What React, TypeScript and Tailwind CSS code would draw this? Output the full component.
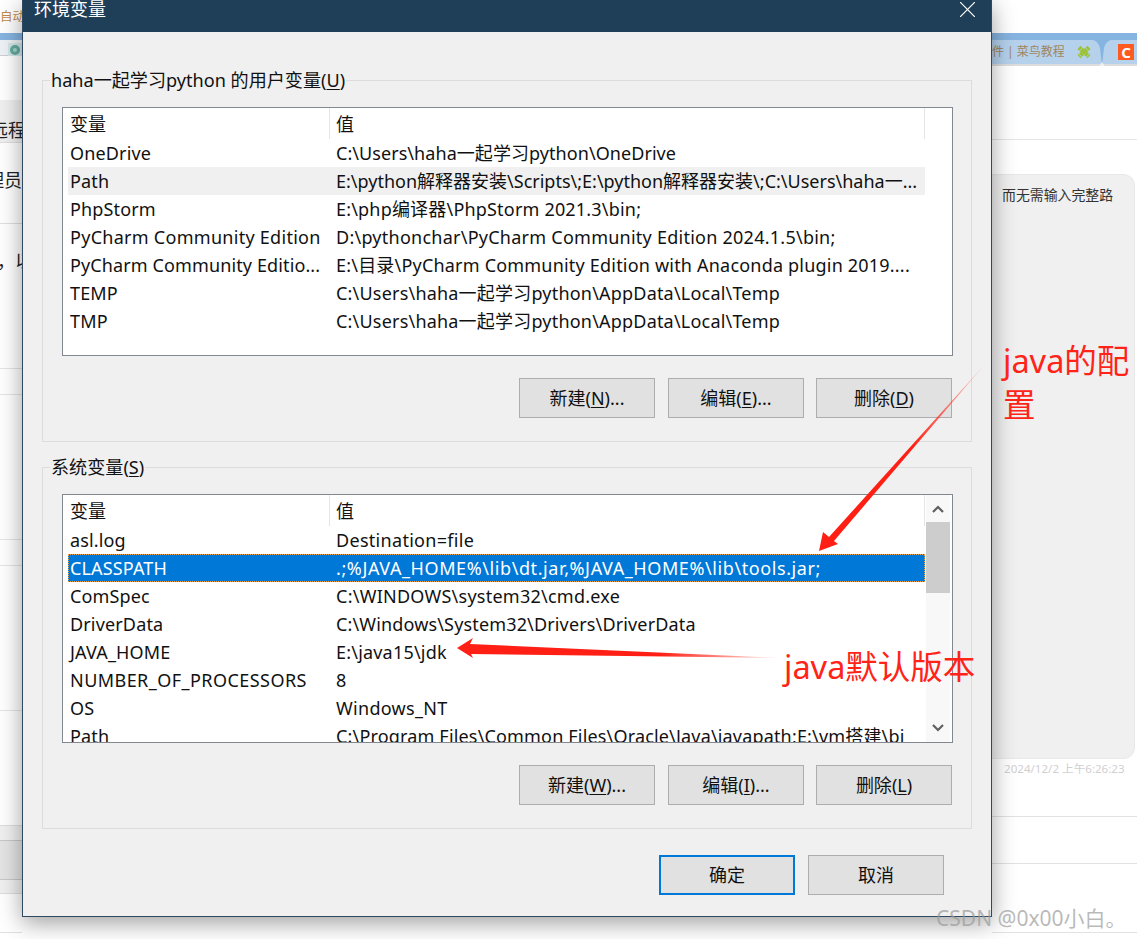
import React from "react";

const FONT = "font-['Noto_Sans','Noto_Sans_CJK_SC',sans-serif]";

type Row = { name: string; value: string; state?: "hover" | "selected"; tr?: string; nameTr?: string };

const userRows: Row[] = [
  { name: "OneDrive", value: "C:\\Users\\haha一起学习python\\OneDrive", tr: "tracking-[0.06px]" },
  { name: "Path", value: "E:\\python解释器安装\\Scripts\\;E:\\python解释器安装\\;C:\\Users\\haha一...", state: "hover", tr: "tracking-[0px]" },
  { name: "PhpStorm", value: "E:\\php编译器\\PhpStorm 2021.3\\bin;", tr: "tracking-[0.19px]" },
  { name: "PyCharm Community Edition", value: "D:\\pythonchar\\PyCharm Community Edition 2024.1.5\\bin;", tr: "tracking-[0.25px]", nameTr: "tracking-[0.28px]" },
  { name: "PyCharm Community Editio...", value: "E:\\目录\\PyCharm Community Edition with Anaconda plugin 2019....", tr: "tracking-[0.2px]", nameTr: "tracking-[0.12px]" },
  { name: "TEMP", value: "C:\\Users\\haha一起学习python\\AppData\\Local\\Temp", tr: "tracking-[0.2px]" },
  { name: "TMP", value: "C:\\Users\\haha一起学习python\\AppData\\Local\\Temp", tr: "tracking-[0.2px]" },
];

const systemRows: Row[] = [
  { name: "asl.log", value: "Destination=file", tr: "tracking-[0.3px]" },
  { name: "CLASSPATH", value: ".;%JAVA_HOME%\\lib\\dt.jar,%JAVA_HOME%\\lib\\tools.jar;", state: "selected", tr: "tracking-[0.59px]" },
  { name: "ComSpec", value: "C:\\WINDOWS\\system32\\cmd.exe", tr: "tracking-[0.25px]" },
  { name: "DriverData", value: "C:\\Windows\\System32\\Drivers\\DriverData", tr: "tracking-[0.15px]" },
  { name: "JAVA_HOME", value: "E:\\java15\\jdk", tr: "tracking-[0.2px]" },
  { name: "NUMBER_OF_PROCESSORS", value: "8", nameTr: "tracking-[0.45px]" },
  { name: "OS", value: "Windows_NT", tr: "tracking-[0.3px]" },
  { name: "Path", value: "C:\\Program Files\\Common Files\\Oracle\\Java\\javapath;E:\\vm搭建\\bi", tr: "tracking-[0.17px]" },
];

function Mnemonic({ label, k, tail = "" }: { label: string; k: string; tail?: string }) {
  return (
    <>
      {label}(<span className="underline underline-offset-2 decoration-1">{k}</span>){tail}
    </>
  );
}

function WinButton({ children, primary, className = "" }: { children: React.ReactNode; primary?: boolean; className?: string }) {
  return (
    <button
      className={
        "w-[136px] h-10 flex items-center justify-center bg-[#e1e1e1] text-[18px] text-[#111] " +
        (primary ? "border-2 border-[#0078d7] " : "border border-[#adadad] ") +
        className
      }
    >
      {children}
    </button>
  );
}

function ListView({ rows, scroll }: { rows: Row[]; scroll?: boolean }) {
  return (
    <div className="ml-[19px] w-[891px] h-[249px] border border-[#828790] bg-white flex overflow-hidden">
      <div className="w-[863px] pl-[5px] flex flex-col shrink-0">
        <div className="h-[31px] shrink-0 flex text-[18px] text-[#111] leading-[33px]">
          <div className="w-[262px] pl-[2px] border-r border-[#e5e5e5]">变量</div>
          <div className="w-[595px] pl-[6px] border-r border-[#e5e5e5]">值</div>
        </div>
        {rows.map((r) => (
          <div
            key={r.name + r.value}
            className={
              "w-[857px] h-7 shrink-0 flex text-[18px] leading-7 whitespace-nowrap " +
              (r.state === "selected"
                ? "bg-[#0078d7] text-white outline-1 outline-dotted outline-[#e8a04a] -outline-offset-1"
                : r.state === "hover"
                  ? "bg-[#f0f0f0] text-[#111]"
                  : "text-[#111]")
            }
          >
            <div className={"w-[261px] pl-[2px] overflow-hidden " + (r.nameTr ?? "tracking-[0.15px]")}>{r.name}</div>
            <div className={"w-[596px] pl-[7px] overflow-hidden " + (r.tr ?? "")}>{r.value}</div>
          </div>
        ))}
      </div>
      {scroll && (
        <div className="w-[24px] flex flex-col bg-[#f8f8f8]">
          <div className="h-[27px] flex items-center justify-center">
            <svg width="12" height="8" viewBox="0 0 12 8"><path d="M1 7l5-5 5 5" fill="none" stroke="#606060" strokeWidth="2.2" /></svg>
          </div>
          <div className="h-[71px] bg-[#cdcdcd]" />
          <div className="flex-1" />
          <div className="h-[26px] pb-[3px] flex items-center justify-center">
            <svg width="12" height="8" viewBox="0 0 12 8"><path d="M1 1l5 5 5-5" fill="none" stroke="#606060" strokeWidth="2.2" /></svg>
          </div>
        </div>
      )}
    </div>
  );
}

function Group({ title, rows, buttons, scroll, className }: { title: React.ReactNode; rows: Row[]; buttons: React.ReactNode[]; scroll?: boolean; className: string }) {
  return (
    <div className={"ml-[19px] w-[930px] h-[362px] border border-[#dcdcdc] " + className}>
      <div className="ml-[7px] -mt-[15px] w-fit h-7 px-[1px] bg-[#f0f0f0] text-[18.1px] leading-7 text-[#111] whitespace-nowrap">{title}</div>
      <div className="mt-[13px]">
        <ListView rows={rows} scroll={scroll} />
      </div>
      <div className="mt-[22px] ml-[476px] flex gap-[12px]">
        {buttons.map((b, i) => (
          <WinButton key={i} className={i === 0 ? "mr-[1px]" : ""}>{b}</WinButton>
        ))}
      </div>
    </div>
  );
}

function LeftStrip() {
  return (
    <div className="w-[22px] shrink-0 relative overflow-hidden flex flex-col text-[#222] text-[18px] whitespace-nowrap">
      <div className="h-[33px] pt-[7px] text-[12.5px] leading-5 text-[#c08a4a]">自动</div>
      <div className="h-[7px] bg-[#86b4e0]" />
      <div className="h-[16px] bg-[#eef2f6] pl-2 pt-[3px] border-b border-[#d0d0d0]">
        <div className="w-[14px] h-[13px] bg-[#d3e6e8] flex items-center justify-center">
          <svg width="12" height="12" viewBox="0 0 12 12"><circle cx="6" cy="6" r="5" fill="#62ab9e" /><circle cx="6" cy="6" r="2" fill="#a8d6cc" /></svg>
        </div>
      </div>
      <div className="h-[44px]" />
      <div className="h-[43px] bg-[#f0f0f0] border-b border-[#e0e0e0] pt-[18px] leading-6 -indent-[10px]">远程</div>
      <div className="h-[80px] pt-[27px] -indent-[14px] leading-5">理员</div>
      <div className="h-[1px] bg-[#e0e0e0]" />
      <div className="h-[144px] pt-[27px] -indent-[3px] leading-5">，以</div>
      <div className="h-[1px] bg-[#e5e5e5]" />
      <div className="h-[25px]" />
      <div className="h-[1px] bg-[#e5e5e5]" />
      <div className="h-[144px]" />
      <div className="h-[1px] bg-[#e5e5e5]" />
      <div className="h-[25px]" />
      <div className="h-[1px] bg-[#e5e5e5]" />
      <div className="h-[144px]" />
      <div className="h-[1px] bg-[#e5e5e5]" />
      <div className="h-[114px]" />
      <div className="h-[15px] bg-[#f0f0f0] border-t border-[#ddd]" />
      <div className="h-[40px] bg-[#e4e4e4] border-y border-[#c8c8c8]" />
      <div className="h-[14px] bg-[#f0f0f0] border-b border-[#ddd]" />
      <div className="h-[38px]" />
      <div className="h-[1px] bg-[#e0e0e0]" />
    </div>
  );
}

function RightStrip() {
  return (
    <div className="flex-1 flex flex-col min-w-0 overflow-hidden whitespace-nowrap">
      <div className="h-[33px]" />
      <div className="relative h-[33px] bg-[#86b4e0] pt-[7px] flex border-b-2 border-[#dcdcdc]">
        <div className="flex-1 h-[24px] bg-[#b5d1ec] flex items-center">
          <span className="text-[12px] text-[#a08660] w-[72px] overflow-hidden">件 | 菜鸟教程</span>
          <svg className="ml-[13px] shrink-0" width="14" height="14" viewBox="0 0 14 14"><path d="M2 2.5l10 9M12 2.5l-10 9" stroke="#9cc22f" strokeWidth="4.4" strokeDasharray="2.4 .6" fill="none" /></svg>
          <div className="ml-[27px] shrink-0 w-4 h-4 bg-[#ff5a1f] text-white text-[15px] leading-4 font-bold text-center">C</div>
        </div>
        <svg className="absolute left-[100px] top-[7px]" width="20" height="26" viewBox="0 0 20 26">
          <path d="M1 0Q6 1 8 8L10 25 12 8Q14 1 19 0Z" fill="#86b4e0" />
          <path d="M10 22l-2.5 4h5z" fill="#eef2f6" />
        </svg>
      </div>
      <div className="h-[74px] border-b border-[#e5e5e5]" />
      <div className="h-[34px]" />
      <div className="h-[585px] w-[143px] bg-[#f0f0f0] rounded-r-xl border-r border-t border-b border-[#e8e8e8] pl-[10px] pt-[12px] text-[13.9px] leading-4 text-[#333]">而无需输入完整路</div>
      <div className="h-[58px] pl-[12px] text-[11.6px] leading-5 text-[#d0d0d0] border-b border-[#e2e2e2]">2024/12/2 上午6:26:23</div>
      <div className="h-[47px] border-b border-[#e2e2e2]" />
      <div className="h-[69px] border-b border-[#e2e2e2]" />
    </div>
  );
}

function Dialog() {
  return (
    <div className="relative z-10 w-[970px] h-[917px] shrink-0 flex flex-col bg-[#f0f0f0] border-x border-b border-[#2f4a60] shadow-[0_6px_22px_rgba(0,0,0,0.38)]">
      <div className="h-8 shrink-0 bg-[#1f3f58] flex items-start justify-between pl-[11px] pr-[16px]">
        <span className="text-[18px] leading-[19px] text-white">环境变量</span>
        <svg className="mt-[2px]" width="15" height="15" viewBox="0 0 15 15"><path d="M0 0l15 15M15 0L0 15" stroke="#fff" strokeWidth="1.2" /></svg>
      </div>
      <Group
        className="mt-[48px]"
        title={<Mnemonic label="haha一起学习python 的用户变量" k="U" />}
        rows={userRows}
        buttons={[
          <Mnemonic label="新建" k="N" tail="..." />,
          <Mnemonic label="编辑" k="E" tail="..." />,
          <Mnemonic label="删除" k="D" />,
        ]}
      />
      <Group
        className="mt-[25px]"
        title={<Mnemonic label="系统变量" k="S" />}
        rows={systemRows}
        scroll
        buttons={[
          <Mnemonic label="新建" k="W" tail="..." />,
          <Mnemonic label="编辑" k="I" tail="..." />,
          <Mnemonic label="删除" k="L" />,
        ]}
      />
      <div className="mt-[26px] ml-[636px] flex gap-[13px]">
        <WinButton primary>确定</WinButton>
        <WinButton>取消</WinButton>
      </div>
    </div>
  );
}

export default function App() {
  return (
    <div className={"relative w-[1137px] h-[939px] overflow-hidden bg-white flex " + FONT}>
      <LeftStrip />
      <Dialog />
      <RightStrip />

      {/* hand-drawn annotations lying over the screenshot */}
      <svg className="absolute inset-0 z-20 pointer-events-none" width="1137" height="939" viewBox="0 0 1137 939">
        <defs>
          <linearGradient id="a1" gradientUnits="userSpaceOnUse" x1="986" y1="363" x2="910" y2="445">
            <stop offset="0" stopColor="#ff2a1a" stopOpacity="0.1" />
            <stop offset="1" stopColor="#ff1f14" />
          </linearGradient>
          <linearGradient id="a2" gradientUnits="userSpaceOnUse" x1="780" y1="658" x2="660" y2="653">
            <stop offset="0" stopColor="#ff2a1a" stopOpacity="0.1" />
            <stop offset="1" stopColor="#ff1f14" />
          </linearGradient>
        </defs>
        <polygon points="819,551 823,532 829,537 986,363 834,541 838,544" fill="url(#a1)" />
        <polygon points="457,648 473,638 470,644 780,658 471,654 473,658" fill="url(#a2)" />
      </svg>
      <div className="absolute z-20 left-[1003px] top-[339px] w-[132px] text-[32.5px] leading-[44px] text-[#ff2318]">java的配置</div>
      <div className="absolute z-20 left-[784px] top-[645px] text-[32.5px] leading-[44px] text-[#ff2318] whitespace-nowrap">java默认版本</div>
      <div className="absolute z-20 left-[936px] top-[905px] text-[21px] leading-[26px] text-[#9a9a9a]/70 whitespace-nowrap">CSDN @0x00小白。</div>
    </div>
  );
}
